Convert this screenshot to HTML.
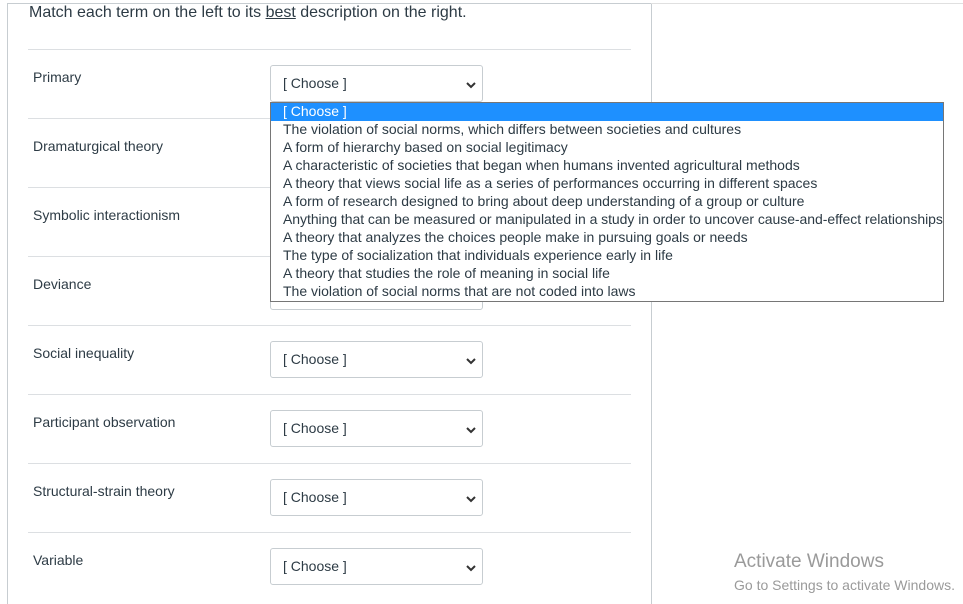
<!DOCTYPE html>
<html><head><style>
body{margin:0;width:963px;height:598px;overflow:hidden;background:#fff;font-family:"Liberation Sans",sans-serif;color:#2d3b45;position:relative}
.frame{position:absolute;left:7px;top:3px;width:643px;height:600px;border-left:1px solid #c7cdd1;border-right:1px solid #c7cdd1;border-top:1px solid #c7cdd1}
.top{position:absolute;left:651px;top:3px;width:312px;border-top:1px solid #e0e0e0}
.q{position:absolute;left:29px;top:4px;font-size:16px}
.hr{position:absolute;left:28px;width:603px;border-top:1px solid #dcdfe2}
.lbl{position:absolute;left:33px;font-size:14px}
.sel{position:absolute;left:270px;width:213px;height:37px;border:1px solid #c7cdd1;border-radius:3px;font-size:14px;box-sizing:border-box;padding:9px 12px}
.sel svg{position:absolute;right:6px;top:15px}
.dd{position:absolute;left:270px;top:102px;width:674px;height:200px;border:1px solid #767676;background:#fff;font-size:14px;box-sizing:border-box}
.dd div{height:18px;line-height:17px;padding-left:12px;white-space:nowrap}
.dd .h{background:#1e90ff;color:#fff}
.aw{position:absolute;left:734px;color:#9a9a9a}
</style></head><body>
<div class="frame"></div><div class="top"></div>
<div class="q">Match each term on the left to its <u>best</u> description on the right.</div>
<div class="hr" style="top:49px"></div>
<div class="hr" style="top:118px"></div>
<div class="hr" style="top:187px"></div>
<div class="hr" style="top:256px"></div>
<div class="hr" style="top:325px"></div>
<div class="hr" style="top:394px"></div>
<div class="hr" style="top:463px"></div>
<div class="hr" style="top:532px"></div>
<div class="lbl" style="top:69px">Primary</div>
<div class="lbl" style="top:138px">Dramaturgical theory</div>
<div class="lbl" style="top:207px">Symbolic interactionism</div>
<div class="lbl" style="top:276px">Deviance</div>
<div class="lbl" style="top:345px">Social inequality</div>
<div class="lbl" style="top:414px">Participant observation</div>
<div class="lbl" style="top:483px">Structural-strain theory</div>
<div class="lbl" style="top:552px">Variable</div>
<div class="sel" style="top:65px">[ Choose ]<svg width="10" height="8"><path d="M1 2l4 4 4-4" stroke="#333" stroke-width="2" fill="none"/></svg></div>
<div class="sel" style="top:272px;height:38px"></div>
<div class="sel" style="top:341px">[ Choose ]<svg width="10" height="8"><path d="M1 2l4 4 4-4" stroke="#333" stroke-width="2" fill="none"/></svg></div>
<div class="sel" style="top:410px">[ Choose ]<svg width="10" height="8"><path d="M1 2l4 4 4-4" stroke="#333" stroke-width="2" fill="none"/></svg></div>
<div class="sel" style="top:479px">[ Choose ]<svg width="10" height="8"><path d="M1 2l4 4 4-4" stroke="#333" stroke-width="2" fill="none"/></svg></div>
<div class="sel" style="top:548px">[ Choose ]<svg width="10" height="8"><path d="M1 2l4 4 4-4" stroke="#333" stroke-width="2" fill="none"/></svg></div>
<div class="dd">
<div class="h">[ Choose ]</div>
<div>The violation of social norms, which differs between societies and cultures</div>
<div>A form of hierarchy based on social legitimacy</div>
<div>A characteristic of societies that began when humans invented agricultural methods</div>
<div>A theory that views social life as a series of performances occurring in different spaces</div>
<div>A form of research designed to bring about deep understanding of a group or culture</div>
<div style="letter-spacing:-0.05px">Anything that can be measured or manipulated in a study in order to uncover cause-and-effect relationships</div>
<div>A theory that analyzes the choices people make in pursuing goals or needs</div>
<div>The type of socialization that individuals experience early in life</div>
<div>A theory that studies the role of meaning in social life</div>
<div>The violation of social norms that are not coded into laws</div>
</div>
<div class="aw" style="top:551px;font-size:19px">Activate Windows</div>
<div class="aw" style="top:577px;font-size:14px;white-space:nowrap">Go to Settings to activate Windows.</div>
</body></html>
